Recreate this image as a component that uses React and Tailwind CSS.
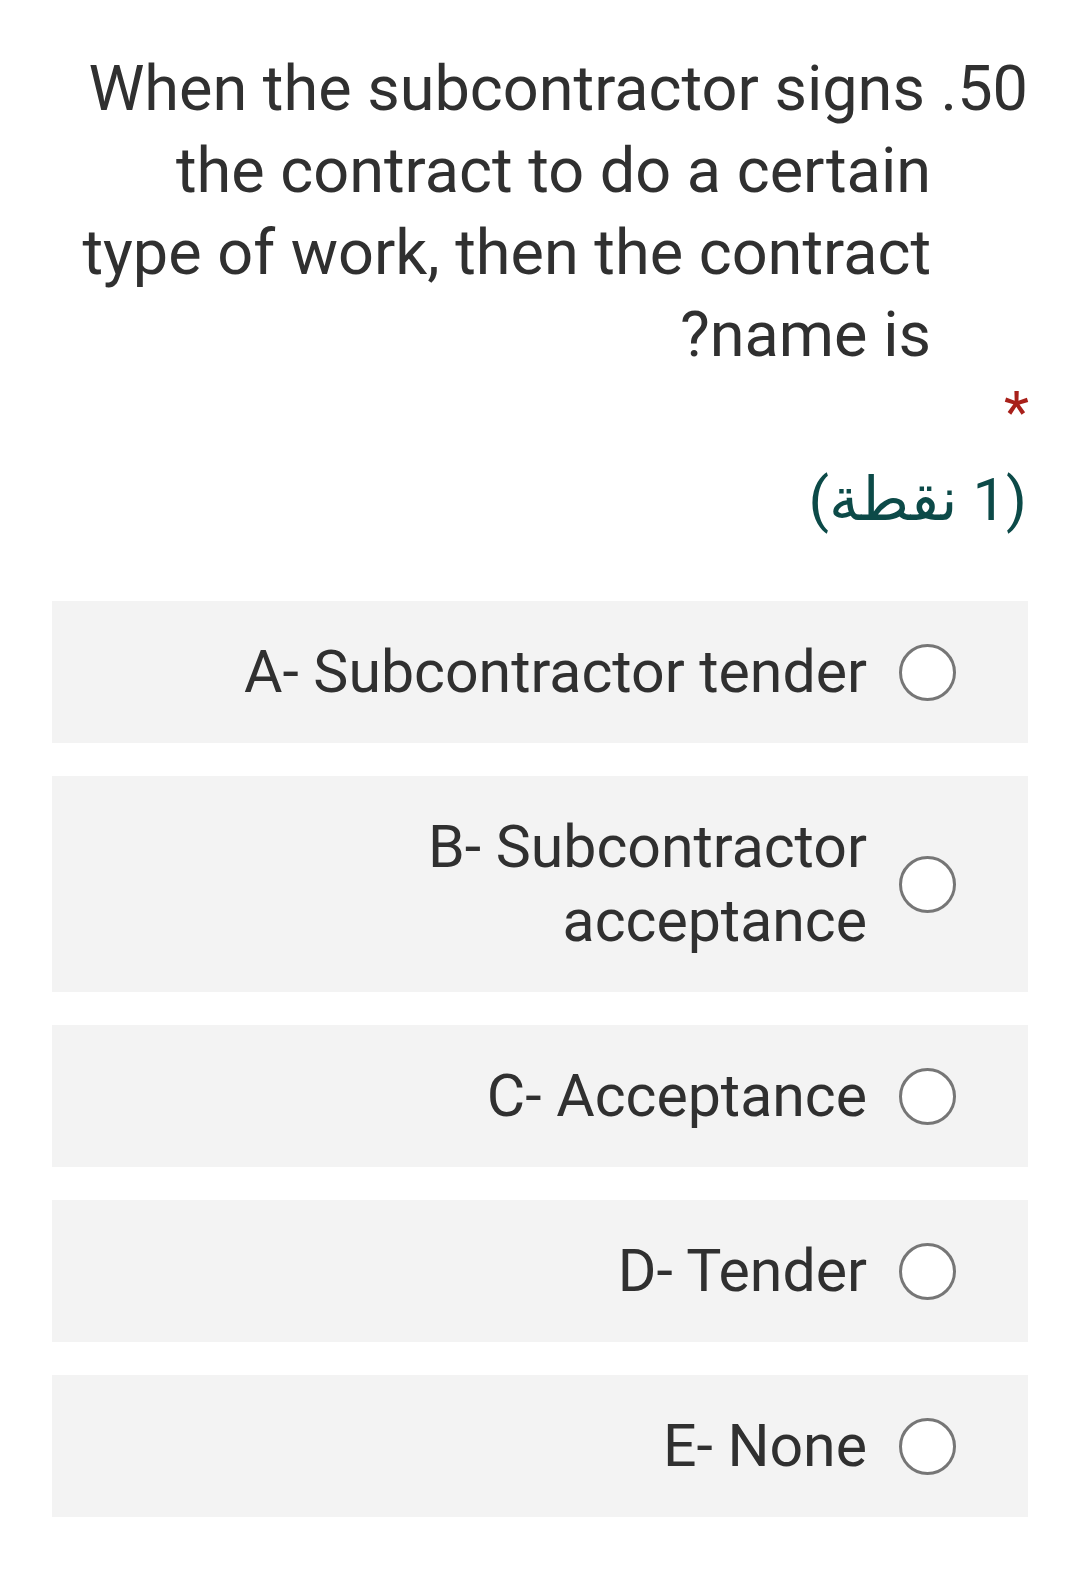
import React, { useState } from "react";

const options = [
  { id: "a", label: ["A- Subcontractor tender"] },
  { id: "b", label: ["B- Subcontractor", "acceptance"] },
  { id: "c", label: ["C- Acceptance"] },
  { id: "d", label: ["D- Tender"] },
  { id: "e", label: ["E- None"] },
];

const Radio = ({ checked }) => (
  <span className="flex h-[57px] w-[57px] shrink-0 items-center justify-center rounded-full border-[3px] border-[#767676] bg-white">
    {checked && <span className="h-[28px] w-[28px] rounded-full bg-[#767676]" />}
  </span>
);

export default function App() {
  const [selected, setSelected] = useState(null);

  return (
    <div
      dir="rtl"
      className="min-h-[1578px] w-[1080px] bg-white pt-[48px] text-[#303030]"
      style={{ fontFamily: 'Roboto, "DejaVu Sans", sans-serif' }}
    >
      <p className="mr-[149px] indent-[-97px] text-[63px] leading-[82px]">
        50. When the subcontractor signs
        <br />
        the contract to do a certain
        <br />
        type of work, then the contract
        <br />
        name is?
      </p>

      <div className="mr-[51px] mt-[11px] text-[58px] leading-[50px] text-[#a8201a]">*</div>

      <div className="mr-[53px] mt-[26px] text-[60px] leading-[74px] text-[#0c4a48]">
        (1 نقطة)
      </div>

      <div className="mx-[52px] mt-[64px] flex flex-col gap-[33px]">
        {options.map((opt) => (
          <label
            key={opt.id}
            onClick={() => setSelected(opt.id)}
            className="flex cursor-pointer items-center gap-[32px] bg-[#f3f3f3] py-[34px] pr-[72px] pl-[40px]"
          >
            <Radio checked={selected === opt.id} />
            <span className="text-[59px] leading-[74px]">
              {opt.label.map((line, i) => (
                <span key={i} className="block">
                  {line}
                </span>
              ))}
            </span>
          </label>
        ))}
      </div>
    </div>
  );
}
